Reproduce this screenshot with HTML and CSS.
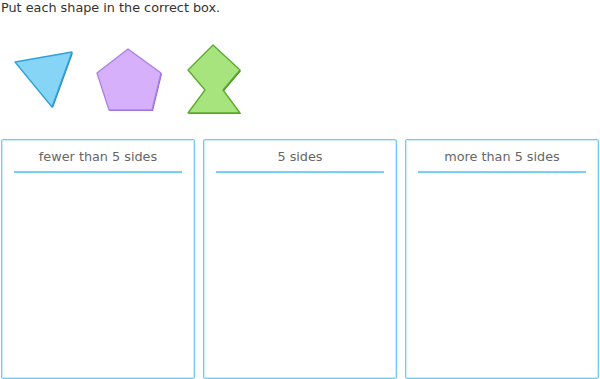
FILE: index.html
```html
<!DOCTYPE html>
<html lang="en">
<head>
    <meta charset="UTF-8">
    <title>Sort the shapes</title>
    <link rel="stylesheet" href="styles.css">
</head>
<body>
    <p class="prompt">Put each shape in the correct box.</p>

    <div class="tray">
        <svg class="shape shape-tri" width="62" height="73" viewBox="13 43 62 73">
            <polygon points="16,63 73,53 53,108" fill="#2386c0"/>
            <polygon points="15,62 72,52 52,107" fill="#86d5f7" stroke="#2ea2d9" stroke-width="1.3" stroke-linejoin="round"/>
        </svg>
        <svg class="shape shape-pent" width="70" height="73" viewBox="94 43 70 73">
            <polygon points="129,50 162,74 153,111 110,111 98,74" fill="#8a5ec6"/>
            <polygon points="128,49 161,73 152,110 109,110 97,73" fill="#d7b0fb" stroke="#a980e4" stroke-width="1.3" stroke-linejoin="round"/>
        </svg>
        <svg class="shape shape-bow" width="57" height="73" viewBox="186 43 57 73">
            <polygon points="214,46 241,71 224,91 241,114 189,114 206,91 189,71" fill="#3e8c18"/>
            <polygon points="213,45 240,70 223,90 240,113 188,113 205,90 188,70" fill="#a8e47e" stroke="#5aab2b" stroke-width="1.3" stroke-linejoin="round"/>
        </svg>
    </div>

    <div class="bins">
        <div class="bin">
            <div class="bin-title">fewer than 5 sides</div>
        </div>
        <div class="bin">
            <div class="bin-title">5 sides</div>
        </div>
        <div class="bin">
            <div class="bin-title">more than 5 sides</div>
        </div>
    </div>
</body>
</html>
```

FILE: styles.css
```css
* {
    margin: 0;
    padding: 0;
    box-sizing: border-box;
}

body {
    font-family: 'DejaVu Sans', Verdana, sans-serif;
    background: #fff;
    width: 600px;
    height: 379px;
    overflow: hidden;
}

.prompt {
    font-size: 12.8px;
    line-height: 15px;
    color: #333;
    padding: 0 0 0 1px;
}

.tray {
    display: flex;
    align-items: flex-start;
    margin-top: 28px;
    padding-left: 13px;
    height: 73px;
}

.shape {
    display: block;
}

.shape-tri {
    margin-right: 19px;
}

.shape-pent {
    margin-right: 22px;
}

.bins {
    display: flex;
    gap: 8px;
    margin-top: 23px;
    padding-left: 1px;
}

.bin {
    width: 194px;
    height: 240px;
    border: 1px solid #6fcdf3;
    border-radius: 2px;
    box-shadow: inset 0 0 0 1px #c9edfb;
    padding: 9px 12px 0;
}

.bin-title {
    font-size: 12.8px;
    line-height: 16px;
    color: #666;
    text-align: center;
    padding-bottom: 6px;
    border-bottom: 2px solid #74d1f5;
}
```
